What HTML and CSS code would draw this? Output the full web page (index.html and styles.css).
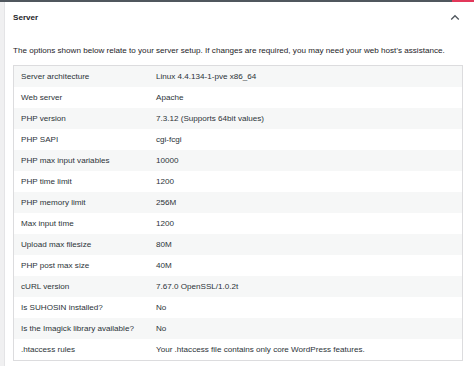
FILE: index.html
```html
<!DOCTYPE html>
<html>
<head>
<meta charset="utf-8">
<link rel="stylesheet" href="styles.css">
</head>
<body>
<div class="topbar"><div class="topbar-fill"></div><div class="topbar-red"></div></div>
<div class="page">
  <div class="gutter"></div>
  <main class="panel">
    <div class="heading">
      <span class="title">Server</span>
      <svg class="chev" width="10" height="7" viewBox="0 0 10 7"><path d="M1.2 5.5 L5 1.7 L8.8 5.5" fill="none" stroke="#50575e" stroke-width="1.3"/></svg>
    </div>
    <p class="desc">The options shown below relate to your server setup. If changes are required, you may need your web host’s assistance.</p>
    <table class="info">
      <tr><td class="k">Server architecture</td><td>Linux 4.4.134-1-pve x86_64</td></tr>
      <tr><td class="k">Web server</td><td>Apache</td></tr>
      <tr><td class="k">PHP version</td><td>7.3.12 (Supports 64bit values)</td></tr>
      <tr><td class="k">PHP SAPI</td><td>cgi-fcgi</td></tr>
      <tr><td class="k">PHP max input variables</td><td>10000</td></tr>
      <tr><td class="k">PHP time limit</td><td>1200</td></tr>
      <tr><td class="k">PHP memory limit</td><td>256M</td></tr>
      <tr><td class="k">Max input time</td><td>1200</td></tr>
      <tr><td class="k">Upload max filesize</td><td>80M</td></tr>
      <tr><td class="k">PHP post max size</td><td>40M</td></tr>
      <tr><td class="k">cURL version</td><td>7.67.0 OpenSSL/1.0.2t</td></tr>
      <tr><td class="k">Is SUHOSIN installed?</td><td>No</td></tr>
      <tr><td class="k">Is the Imagick library available?</td><td>No</td></tr>
      <tr><td class="k">.htaccess rules</td><td>Your .htaccess file contains only core WordPress features.</td></tr>
    </table>
  </main>
</div>
</body>
</html>
```
FILE: styles.css
```css
html, body {
  margin: 0;
  padding: 0;
  background: #fff;
}
body {
  font-family: "Liberation Sans", Arial, sans-serif;
  font-size: 8.1px;
  color: #2c3338;
  width: 474px;
  height: 366px;
  overflow: hidden;
}
.topbar {
  display: flex;
  height: 2px;
}
.topbar-fill {
  flex: 1;
  background: #50575e;
}
.topbar-red {
  width: 22px;
  background: #e2385a;
}
.page {
  display: flex;
  height: 364px;
}
.gutter {
  width: 4px;
  background: #f0f0f1;
  border-right: 1px solid #e4e4e6;
}
.panel {
  flex: 1;
  padding: 0 11px 0 8px;
}
.heading {
  display: flex;
  align-items: center;
  justify-content: space-between;
  height: 30px;
}
.title {
  font-weight: 700;
  color: #1d2327;
}
.chev {
  margin-right: 3px;
}
.desc {
  margin: 13px 0 9px;
  line-height: 11px;
  color: #1d2327;
}
.info {
  width: 100%;
  border-collapse: collapse;
  border: 1px solid #dcdcde;
}
.info td {
  height: 21px;
  padding: 0 7px;
  vertical-align: middle;
  white-space: nowrap;
}
.info tr:nth-child(odd) {
  background: #f6f7f7;
}
.info td.k {
  width: 121px;
}
```
